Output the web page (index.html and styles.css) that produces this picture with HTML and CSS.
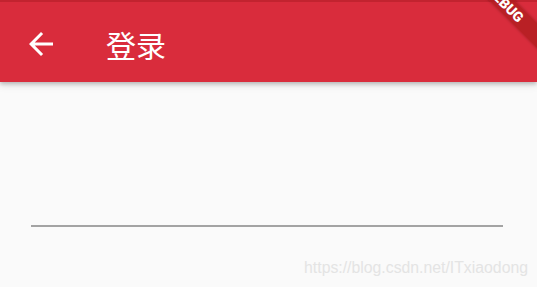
FILE: index.html
```html
<!DOCTYPE html>
<html>
    <head>
        <meta charset="utf-8">
        <link rel="stylesheet" href="styles.css">
    </head>
    <body>
        <header class="appbar">
            <button class="back" type="button">
                <svg width="36" height="36" viewBox="0 0 24 24">
                    <path d="M20 11H7.83l5.59-5.59L12 4l-8 8 8 8 1.41-1.41L7.83 13H20v-2z" fill="#ffffff"/>
                </svg>
            </button>
            <h1 class="title">登录</h1>
        </header>
        <main class="page">
            <input class="field" type="text" autocomplete="off">
        </main>
        <div class="banner">DEBUG</div>
        <div class="watermark">https://blog.csdn.net/ITxiaodong</div>
    </body>
</html>
```

FILE: styles.css
```css
*{
    box-sizing: border-box;
    margin: 0px;
}
html, body{
    width: 537px;
    height: 287px;
    overflow: hidden;
}
body{
    position: relative;
    background-color: #fafafa;
    font-family: "Roboto", "Noto Sans CJK SC", sans-serif;
}
.appbar{
    position: relative;
    z-index: 1;
    display: flex;
    align-items: center;
    height: 82px;
    padding-top: 4px;
    background-color: #d92c3c;
    border-top: 2px solid #c2232f;
    box-shadow: 0 2px 4px rgba(0, 0, 0, 0.22), 0 4px 8px rgba(0, 0, 0, 0.08);
}
.back{
    display: flex;
    width: 36px;
    height: 36px;
    margin-left: 23px;
    padding: 0;
    border: none;
    background: none;
    cursor: pointer;
}
.title{
    margin-left: 47px;
    color: #ffffff;
    font-family: "Noto Sans CJK SC", sans-serif;
    font-size: 30px;
    font-weight: 400;
    line-height: 36px;
}
.page{
    padding: 101px 34px 0 31px;
}
.field{
    display: block;
    width: 100%;
    height: 44px;
    border: none;
    border-bottom: 2px solid #a3a3a3;
    background: transparent;
    outline: none;
    font-size: 22px;
}
.banner{
    position: absolute;
    left: 447px;
    top: -5px;
    width: 117px;
    height: 18px;
    transform: rotate(45deg);
    background-color: rgba(170, 26, 26, 0.68);
    box-shadow: 0 0 3px rgba(0, 0, 0, 0.25);
    color: #ffffff;
    font-family: "Roboto", sans-serif;
    font-size: 14px;
    font-weight: 900;
    line-height: 18px;
    text-align: center;
    z-index: 2;
}
.watermark{
    position: absolute;
    right: 9px;
    top: 259px;
    color: #e4e4e4;
    font-family: "Liberation Sans", sans-serif;
    font-size: 15.8px;
    line-height: 17px;
}
```
